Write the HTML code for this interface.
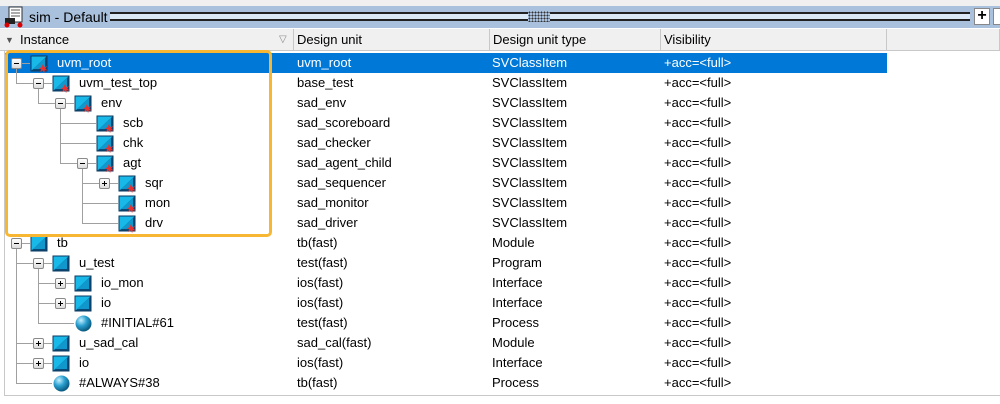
<!DOCTYPE html>
<html><head><style>
body{margin:0;width:1000px;height:404px;background:#fff;font-family:"Liberation Sans",sans-serif;font-size:13px;color:#000;position:relative;overflow:hidden}
.a{position:absolute}
.t{position:absolute;white-space:nowrap;line-height:20px}
.hl{position:absolute;height:1px;background:#a0a0a0}
.vl{position:absolute;width:1px;background:#a0a0a0}
.ex{position:absolute;width:11px;height:11px;border:1px solid #8a8a8a;background:linear-gradient(#fff,#dcdcdc);box-sizing:border-box;border-radius:2px}
.ex:before{content:"";position:absolute;left:2px;top:4px;width:5px;height:1px;background:#000}
.ex.p:after{content:"";position:absolute;left:4px;top:2px;width:1px;height:5px;background:#000}
.hdr{position:absolute;top:29px;height:22px;line-height:22px;background:#f0f0f0;border-right:1px solid #c8c8c8;border-bottom:1px solid #c8c8c8;box-sizing:border-box;padding-left:3px}
</style></head><body>
<div class="a" style="left:0;top:0;width:1000px;height:6px;background:#f0f0f0;border-bottom:1px solid #c0c0c0"></div>
<div class="a" style="left:0;top:6px;width:1000px;height:22px;background:#a9c1dd"></div>
<svg class="a" style="left:3px;top:6px" width="22" height="22" viewBox="0 0 22 22"><rect x="6" y="1" width="13" height="15" fill="#fff" stroke="#333"/><path d="M8 4h9M8 7h9M8 10h9" stroke="#555"/><path d="M2 12h10v6H2z" fill="#222"/><circle cx="4" cy="19" r="2.5" fill="#d00"/><circle cx="17" cy="19" r="2.5" fill="#d00"/></svg>
<div class="t" style="left:29px;top:6px;line-height:22px;font-size:14px">sim - Default</div>
<div class="a" style="left:110px;top:12px;width:860px;height:9px;border-top:2px solid #222;border-bottom:2px solid #222;box-sizing:border-box;background:#dbe8f5"></div>
<div class="a" style="left:528px;top:11px;width:22px;height:11px;background:#a9c1dd;background-image:radial-gradient(#333 0.8px,transparent 1px);background-size:3px 3px"></div>
<div class="a" style="left:974px;top:8px;width:16px;height:17px;background:#fff;border:1px solid #888;box-sizing:border-box;font-weight:bold;font-size:16px;line-height:14px;text-align:center">+</div>
<div class="a" style="left:993px;top:8px;width:10px;height:17px;background:#fff;border:1px solid #888;box-sizing:border-box"></div>
<div class="hdr" style="left:0;width:294px;padding-left:20px">Instance</div>
<div class="t" style="left:5px;top:30px;font-size:9px;color:#555">▼</div>
<div class="t" style="left:279px;top:30px;font-size:10px;color:#888">▽</div>
<div class="hdr" style="left:294px;width:196px">Design unit</div>
<div class="hdr" style="left:490px;width:171px">Design unit type</div>
<div class="hdr" style="left:661px;width:226px">Visibility</div>
<div class="hdr" style="left:887px;width:113px"></div>
<div class="a" style="left:5px;top:53px;width:882px;height:20px;background:#0078d7"></div>
<div class="vl" style="left:4px;top:51px;height:344px;background:#c8c8c8"></div>
<div class="a" style="left:4px;top:395px;width:996px;height:1px;background:#c8c8c8"></div>
<div id="tree"></div>
<div class="a" style="left:5px;top:50px;width:267px;height:187px;border:3px solid #f7b733;border-radius:5px;box-sizing:border-box"></div>
<script>
var R=[["uvm_root",0,"-","c","uvm_root","SVClassItem"],["uvm_test_top",1,"-","c","base_test","SVClassItem"],["env",2,"-","c","sad_env","SVClassItem"],["scb",3,"","c","sad_scoreboard","SVClassItem"],["chk",3,"","c","sad_checker","SVClassItem"],["agt",3,"-","c","sad_agent_child","SVClassItem"],["sqr",4,"+","c","sad_sequencer","SVClassItem"],["mon",4,"","c","sad_monitor","SVClassItem"],["drv",4,"","c","sad_driver","SVClassItem"],["tb",0,"-","m","tb(fast)","Module"],["u_test",1,"-","m","test(fast)","Program"],["io_mon",2,"+","m","ios(fast)","Interface"],["io",2,"+","m","ios(fast)","Interface"],["#INITIAL#61",2,"","s","test(fast)","Process"],["u_sad_cal",1,"+","m","sad_cal(fast)","Module"],["io",1,"+","m","ios(fast)","Interface"],["#ALWAYS#38",1,"","s","tb(fast)","Process"]];
var V=[[0,0,1],[1,1,2],[2,2,5],[3,5,8],[0,9,16],[1,10,13]];
var h="";
function cy(i){return 63+20*i}
V.forEach(function(v){h+='<div class="vl" style="left:'+(16+22*v[0])+'px;top:'+cy(v[1])+'px;height:'+(cy(v[2])-cy(v[1]))+'px"></div>'});
R.forEach(function(r,i){var L=r[1],y=cy(i),sel=i==0,col=sel?"#fff":"#000";
var px=L?16+22*(L-1):16;var ix=30+22*L;
h+='<div class="hl" style="left:'+px+'px;top:'+y+'px;width:'+(ix-px)+'px"></div>';
if(r[2])h+='<div class="ex'+(r[2]=="+"?" p":"")+'" style="left:'+(11+22*L)+'px;top:'+(y-5)+'px"></div>';
if(r[3]=="s")h+='<svg class="a" style="left:'+(ix+1)+'px;top:'+(y-8)+'px" width="17" height="17"><defs><radialGradient id="g'+i+'" cx="35%" cy="30%" r="70%"><stop offset="0" stop-color="#c8f0ff"/><stop offset=".5" stop-color="#2aa0d0"/><stop offset="1" stop-color="#0a5a80"/></radialGradient></defs><circle cx="8.5" cy="8.5" r="8" fill="url(#g'+i+')"/></svg>';
else{h+='<svg class="a" style="left:'+ix+'px;top:'+(y-9)+'px" width="19" height="19"><rect x="1" y="2" width="16" height="15" fill="#18b8e8"/><path d="M1 17L17 2V17Z" fill="#0a4a78"/><path d="M3 15L15 4V15Z" fill="#1098cc"/><rect x="1" y="2" width="16" height="15" fill="none" stroke="#0a3a60" stroke-width="1"/>'+(r[3]=="c"?'<path d="M13 10l1.2 3 3-1-2 2.5 2.5 2-3-.3-.5 2.8-1.5-2.5-2.5 1.5 1-2.8-2.8-1 3-.7z" fill="#e83030"/>':'')+'</svg>';}
h+='<div class="t" style="left:'+(57+22*L)+'px;top:'+(y-10)+'px;color:'+col+'">'+r[0]+'</div>';
h+='<div class="t" style="left:297px;top:'+(y-10)+'px;color:'+col+'">'+r[4]+'</div>';
h+='<div class="t" style="left:492px;top:'+(y-10)+'px;color:'+col+'">'+r[5]+'</div>';
h+='<div class="t" style="left:664px;top:'+(y-10)+'px;color:'+col+'">+acc=&lt;full&gt;</div>';
});
document.getElementById("tree").innerHTML=h;
</script>
</body></html>
